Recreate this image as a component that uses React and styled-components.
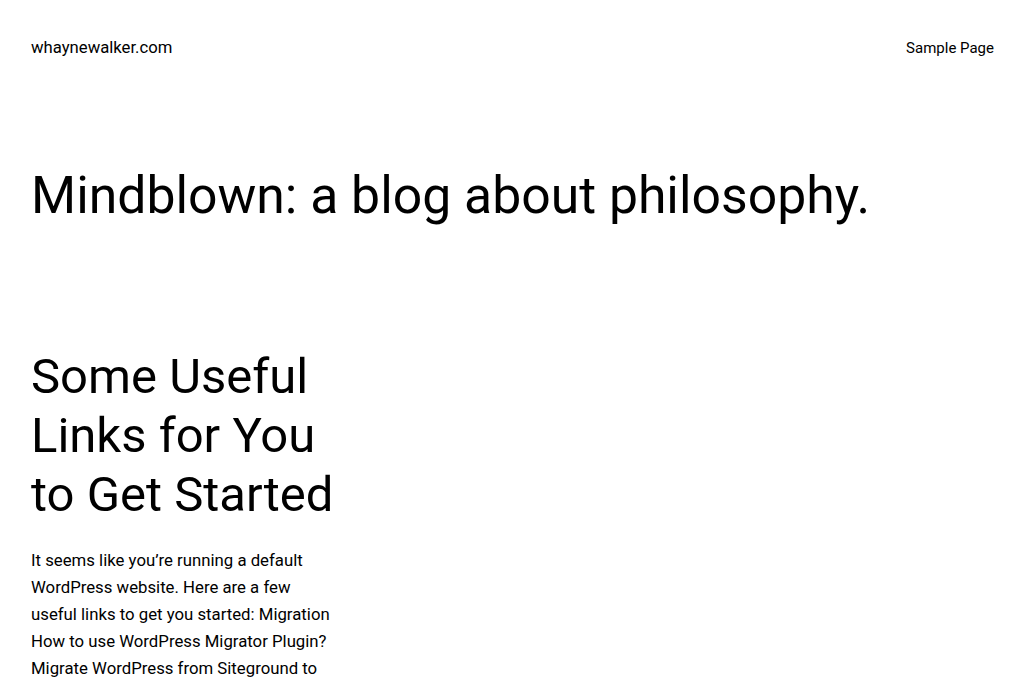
import React from "react";
import styled, { createGlobalStyle } from "styled-components";

const Global = createGlobalStyle`
  html, body { margin: 0; padding: 0; background: #ffffff; }
  body { font-family: Roboto, "Liberation Sans", sans-serif; color: #000000; -webkit-font-smoothing: antialiased; }
  * { box-sizing: border-box; }
`;

const Page = styled.div`
  padding: 0 30px 0 31px;
`;

const Header = styled.header`
  display: flex;
  justify-content: space-between;
  align-items: center;
  padding-top: 37px;
  height: 59px;
`;

const SiteTitle = styled.a`
  font-size: 16.7px;
  color: #000000;
  text-decoration: none;
  line-height: 1;
`;

const Nav = styled.nav`
  display: flex;
  gap: 24px;
`;

const NavLink = styled.a`
  font-size: 15px;
  color: #000000;
  text-decoration: none;
  line-height: 1;
  margin-top: 1px;
`;

const Hero = styled.h1`
  margin: 106px 0 0;
  font-size: 51.7px;
  font-weight: 400;
  line-height: 1.2;
  letter-spacing: 0;
`;

const Grid = styled.div`
  display: grid;
  grid-template-columns: repeat(3, 1fr);
  gap: 24px;
  margin-top: 121px;
`;

const Post = styled.article`
  display: flex;
  flex-direction: column;
`;

const PostTitle = styled.h2`
  margin: 0;
  font-size: 49px;
  font-weight: 400;
  line-height: 1.2;
`;

const Excerpt = styled.p`
  margin: 23px 0 0;
  font-size: 16.75px;
  line-height: 27px;
`;

export default function App() {
  return (
    <>
      <Global />
      <Page>
        <Header>
          <SiteTitle href="#">whaynewalker.com</SiteTitle>
          <Nav>
            <NavLink href="#">Sample Page</NavLink>
          </Nav>
        </Header>
        <Hero>Mindblown: a blog about philosophy.</Hero>
        <Grid>
          <Post>
            <PostTitle>Some Useful Links for You to Get Started</PostTitle>
            <Excerpt>
              It seems like you’re running a default WordPress website. Here are a few useful links to get you started: Migration How to use WordPress Migrator Plugin? Migrate WordPress from Siteground to
            </Excerpt>
          </Post>
        </Grid>
      </Page>
    </>
  );
}
